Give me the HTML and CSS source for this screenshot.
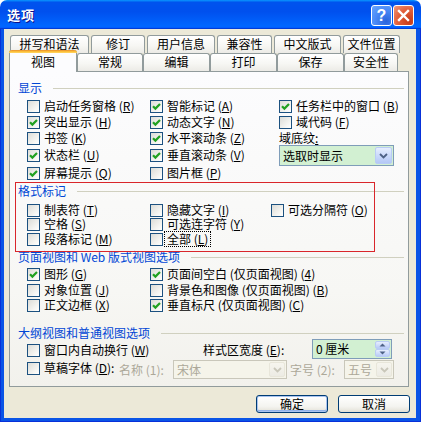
FILE: index.html
```html
<!DOCTYPE html>
<html lang="zh-CN">
<head>
<meta charset="utf-8">
<title>选项</title>
<link rel="stylesheet" href="styles.css">
</head>
<body>
<div class="window">
  <div class="titlebar">
    <span class="title">选项</span>
    <div class="tb-buttons">
      <span class="tb-btn help">?</span>
      <span class="tb-btn close"><svg width="19" height="19" viewBox="0 0 19 19"><path d="M5 5 L14 14 M14 5 L5 14" stroke="#fff" stroke-width="2.4" stroke-linecap="square"/></svg></span>
    </div>
  </div>
  <div class="frame">
    <div class="client">
      <div class="tabrow row1">
        <span class="tab">拼写和语法</span>
        <span class="tab">修订</span>
        <span class="tab">用户信息</span>
        <span class="tab">兼容性</span>
        <span class="tab">中文版式</span>
        <span class="tab">文件位置</span>
      </div>
      <div class="tabrow row2">
        <span class="tab sel">视图</span>
        <span class="tab">常规</span>
        <span class="tab">编辑</span>
        <span class="tab">打印</span>
        <span class="tab">保存</span>
        <span class="tab">安全性</span>
      </div>
      <div class="panel">
        <section class="group g1">
          <div class="ghead"><span class="gtitle">显示</span><span class="gline"></span></div>
          <div class="grid grid1">
            <label class="cb"><span class="box"></span><span class="lbl">启动任务窗格 (<u>R</u>)</span></label>
            <label class="cb"><span class="box on"><svg viewBox="0 0 11 11"><path d="M2 5.2 L4.4 7.6 L9 3" /></svg></span><span class="lbl">智能标记 (<u>A</u>)</span></label>
            <label class="cb"><span class="box on"><svg viewBox="0 0 11 11"><path d="M2 5.2 L4.4 7.6 L9 3" /></svg></span><span class="lbl">任务栏中的窗口 (<u>B</u>)</span></label>

            <label class="cb"><span class="box on"><svg viewBox="0 0 11 11"><path d="M2 5.2 L4.4 7.6 L9 3" /></svg></span><span class="lbl">突出显示 (<u>H</u>)</span></label>
            <label class="cb"><span class="box on"><svg viewBox="0 0 11 11"><path d="M2 5.2 L4.4 7.6 L9 3" /></svg></span><span class="lbl">动态文字 (<u>N</u>)</span></label>
            <label class="cb"><span class="box"></span><span class="lbl">域代码 (<u>F</u>)</span></label>

            <label class="cb"><span class="box"></span><span class="lbl">书签 (<u>K</u>)</span></label>
            <label class="cb"><span class="box on"><svg viewBox="0 0 11 11"><path d="M2 5.2 L4.4 7.6 L9 3" /></svg></span><span class="lbl">水平滚动条 (<u>Z</u>)</span></label>
            <span class="plain">域底纹<u>:</u></span>

            <label class="cb"><span class="box on"><svg viewBox="0 0 11 11"><path d="M2 5.2 L4.4 7.6 L9 3" /></svg></span><span class="lbl">状态栏 (<u>U</u>)</span></label>
            <label class="cb"><span class="box on"><svg viewBox="0 0 11 11"><path d="M2 5.2 L4.4 7.6 L9 3" /></svg></span><span class="lbl">垂直滚动条 (<u>V</u>)</span></label>
            <div class="combo shade">
              <span class="ctext">选取时显示</span>
              <span class="arrow"><svg width="9" height="6" viewBox="0 0 9 6"><path d="M1 1 L4.5 4.5 L8 1" /></svg></span>
            </div>

            <label class="cb"><span class="box on"><svg viewBox="0 0 11 11"><path d="M2 5.2 L4.4 7.6 L9 3" /></svg></span><span class="lbl">屏幕提示 (<u>Q</u>)</span></label>
            <label class="cb"><span class="box"></span><span class="lbl">图片框 (<u>P</u>)</span></label>
          </div>
        </section>

        <section class="group g2">
          <div class="ghead"><span class="gtitle">格式标记</span><span class="gline"></span></div>
          <div class="grid grid2">
            <label class="cb"><span class="box"></span><span class="lbl">制表符 (<u>T</u>)</span></label>
            <label class="cb"><span class="box"></span><span class="lbl">隐藏文字 (<u>I</u>)</span></label>
            <label class="cb"><span class="box"></span><span class="lbl">可选分隔符 (<u>O</u>)</span></label>

            <label class="cb"><span class="box"></span><span class="lbl">空格 (<u>S</u>)</span></label>
            <label class="cb"><span class="box"></span><span class="lbl">可选连字符 (<u>Y</u>)</span></label>
            <span></span>

            <label class="cb"><span class="box"></span><span class="lbl">段落标记 (<u>M</u>)</span></label>
            <label class="cb"><span class="box"></span><span class="lbl focus">全部 (<u>L</u>)</span></label>
          </div>
        </section>

        <section class="group g3">
          <div class="ghead"><span class="gtitle">页面视图和 Web 版式视图选项</span><span class="gline"></span></div>
          <div class="grid grid3">
            <label class="cb"><span class="box on"><svg viewBox="0 0 11 11"><path d="M2 5.2 L4.4 7.6 L9 3" /></svg></span><span class="lbl">图形 (<u>G</u>)</span></label>
            <label class="cb"><span class="box on"><svg viewBox="0 0 11 11"><path d="M2 5.2 L4.4 7.6 L9 3" /></svg></span><span class="lbl">页面间空白 (仅页面视图) (<u>4</u>)</span></label>

            <label class="cb"><span class="box"></span><span class="lbl">对象位置 (<u>J</u>)</span></label>
            <label class="cb"><span class="box"></span><span class="lbl">背景色和图像 (仅页面视图) (<u>B</u>)</span></label>

            <label class="cb"><span class="box"></span><span class="lbl">正文边框 (<u>X</u>)</span></label>
            <label class="cb"><span class="box on"><svg viewBox="0 0 11 11"><path d="M2 5.2 L4.4 7.6 L9 3" /></svg></span><span class="lbl">垂直标尺 (仅页面视图) (<u>C</u>)</span></label>
          </div>
        </section>

        <section class="group g4">
          <div class="ghead"><span class="gtitle">大纲视图和普通视图选项</span><span class="gline"></span></div>
          <div class="row row-a">
            <label class="cb w176"><span class="box"></span><span class="lbl">窗口内自动换行 (<u>W</u>)</span></label>
            <span class="plain">样式区宽度 (<u>E</u>):</span>
            <div class="spin shade">
              <span class="ctext">0 厘米</span>
              <span class="spinbtns">
                <span class="sbtn"><svg width="7" height="4" viewBox="0 0 7 4"><path d="M0.5 3.5 L3.5 0.5 L6.5 3.5Z"/></svg></span>
                <span class="sbtn"><svg width="7" height="4" viewBox="0 0 7 4"><path d="M0.5 0.5 L3.5 3.5 L6.5 0.5Z"/></svg></span>
              </span>
            </div>
          </div>
          <div class="row row-b">
            <label class="cb w92"><span class="box"></span><span class="lbl">草稿字体 (<u>D</u>):</span></label>
            <span class="dlabel">名称 (1):</span>
            <div class="combo dis w114">
              <span class="ctext">宋体</span>
              <span class="arrow"><svg width="9" height="6" viewBox="0 0 9 6"><path d="M1 1 L4.5 4.5 L8 1" /></svg></span>
            </div>
            <span class="dlabel ml3">字号 (2):</span>
            <div class="combo dis w50">
              <span class="ctext">五号</span>
              <span class="arrow"><svg width="9" height="6" viewBox="0 0 9 6"><path d="M1 1 L4.5 4.5 L8 1" /></svg></span>
            </div>
          </div>
        </section>
      </div>
      <div class="actions">
        <button class="btn default">确定</button>
        <button class="btn">取消</button>
      </div>
    </div>
  </div>
</div>
</body>
</html>
```

FILE: styles.css
```css
* { box-sizing: border-box; margin: 0; padding: 0; }
html, body { width: 421px; height: 422px; overflow: hidden; }
body {
  background: #ffffff;
  font-family: "Noto Sans CJK SC", "Noto Sans", sans-serif;
  font-size: 12px;
  color: #000;
}
u { text-decoration: underline; text-underline-offset: 1px; }

.window { width: 421px; height: 422px; display: flex; flex-direction: column; }

/* title bar */
.titlebar {
  height: 29px;
  flex: none;
  display: flex;
  align-items: center;
  padding: 0 7px 0 7px;
  border-radius: 7px 7px 0 0;
  background: linear-gradient(180deg, #0997ff, #0053ee 8%, #0050ee 40%, #0066ff 88%, #0066ff 93%, #005bff 95%, #003dd7 96%, #003dd7);
}
.title {
  color: #fff;
  font-weight: bold;
  font-size: 13px;
  line-height: 16px;
  letter-spacing: 1px;
  text-shadow: 1px 1px 0 #0f1089;
  margin-top: 1px;
}
.tb-buttons { margin-left: auto; display: flex; gap: 1px; margin-top: 2px; }
.tb-btn {
  width: 21px; height: 21px;
  border: 1px solid #fff;
  border-radius: 3px;
  display: flex; align-items: center; justify-content: center;
}
.help {
  background: radial-gradient(circle at 75% 80%, #2a63dc 0%, #4b8bf7 55%, #6aa6ff 100%);
  color: #fff;
  font-family: "Liberation Sans", sans-serif;
  font-weight: bold;
  font-size: 16px;
  line-height: 19px;
}
.close {
  background: radial-gradient(circle at 80% 80%, #c73a17 0%, #e2603c 55%, #f09a7e 100%);
}

/* frame + client */
.frame {
  flex: 1;
  display: flex;
  background: #0a54e6;
  border: 1px solid #0831d9;
  border-top: none;
  padding: 0 4px 3px 3px;
}
.client {
  flex: 1;
  background: #ece9d8;
  display: flex;
  flex-direction: column;
  padding: 6px 0 0 5px;
}

/* tabs */
.tabrow { display: flex; }
.row1 { margin-left: 1px; gap: 2px; }
.tab {
  height: 18px;
  border: 1px solid #919b9c;
  border-bottom: none;
  border-radius: 3px 3px 0 0;
  background: linear-gradient(#ffffff, #f7f7f4 55%, #ecebe6);
  text-align: center;
  line-height: 16px;
  white-space: nowrap;
}
.row1 .tab:nth-child(1) { width: 79px; }
.row1 .tab:nth-child(2) { width: 54px; }
.row1 .tab:nth-child(3) { width: 68px; }
.row1 .tab:nth-child(4) { width: 55px; }
.row1 .tab:nth-child(5) { width: 67px; }
.row1 .tab:nth-child(6) { width: 57px; }
.row2 .tab:nth-child(1) { width: 68px; }
.row2 .tab:nth-child(2) { width: 66px; }
.row2 .tab:nth-child(3) { width: 67px; }
.row2 .tab:nth-child(4) { width: 67px; }
.row2 .tab:nth-child(5) { width: 67px; }
.row2 .tab:nth-child(6) { width: 54px; }
.tab.sel {
  position: relative;
  z-index: 2;
  height: 22px;
  margin-top: -3px;
  margin-bottom: -1px;
  border-top: none;
  background: #fcfcfe;
  padding-top: 5px;
  line-height: 14px;
}
.tab.sel::before {
  content: "";
  position: absolute;
  left: -1px; right: -1px; top: 0;
  height: 3px;
  border-radius: 3px 3px 0 0;
  background: linear-gradient(#e68b2c, #ffc73c 60%, #ffd56b);
}

/* panel */
.panel {
  width: 400px;
  height: 316px;
  border: 1px solid #919b9c;
  background: linear-gradient(#fcfcfe, #f7f7f4 70%, #f2f1ec);
  padding: 9px 0 0 8px;
}
.ghead { display: flex; align-items: center; height: 14px; gap: 11px; }
.gtitle { color: #0046d5; line-height: 14px; white-space: nowrap; }
.gline { flex: 1; height: 1px; background: #d0d0bf; margin-right: 4px; }

.grid { display: grid; padding-left: 9px; }
.grid1 {
  grid-template-columns: 123px 129px 1fr;
  grid-template-rows: 16px 16px 17px 18px 17px;
  margin-top: 3px;
}
.grid2 {
  grid-template-columns: 123px 121px 1fr;
  grid-template-rows: 14px 15px 16px;
  margin-top: 4px;
}
.grid3 {
  grid-template-columns: 123px 1fr;
  grid-template-rows: 16px 15px 16px;
  margin-top: 2px;
}

.g2 { position: relative; padding-top: 2px; }
.g2::after {
  content: "";
  position: absolute;
  left: -3px; top: 0;
  width: 358px; height: 68px;
  border: 1px solid #d9262b;
  pointer-events: none;
}
.g3 { margin-top: 3px; }
.g4 { margin-top: 13px; }

/* checkbox */
.cb { display: flex; align-items: flex-start; white-space: nowrap; }
.box {
  flex: none;
  width: 13px; height: 13px;
  margin-top: 2px;
  border: 1px solid #1c5180;
  background: linear-gradient(135deg, #dcdcd7, #f6f6f3 70%, #ffffff);
  display: flex; align-items: center; justify-content: center;
}
.box svg { width: 11px; height: 11px; }
.box svg path { fill: none; stroke: #21a121; stroke-width: 2.2; }
.lbl { margin-left: 4px; margin-top: 1px; line-height: 14px; }
.lbl.focus { outline: 1px dotted #000; margin-left: 2px; padding: 0 2px 0 2px; }
.plain { line-height: 14px; margin-top: 1px; white-space: nowrap; }

/* combos */
.combo {
  display: flex; align-items: center; justify-content: space-between;
  border: 1px solid #7f9db9;
  padding-left: 3px;
}
.shade { background: #d2f0d2; }
.grid1 .combo {
  grid-column: 3;
  grid-row: 4 / span 2;
  align-self: start;
  margin-top: -2px;
  width: 115px; height: 21px;
}
.ctext { line-height: 14px; white-space: nowrap; }
.arrow {
  width: 17px; height: 17px;
  margin-right: 1px;
  border: 1px solid #b9ccf5;
  border-radius: 2px;
  background: linear-gradient(#e6eefe, #c6d6fa 60%, #b4c8f6);
  display: flex; align-items: center; justify-content: center;
}
.arrow svg path { fill: none; stroke: #4d6185; stroke-width: 1.8; }
.combo.dis {
  height: 19px;
  border-color: #c9c7ba;
  background: #f5f4ea;
  color: #aca899;
}
.combo.dis .arrow {
  width: 16px; height: 15px;
  border-color: #e8e6da;
  background: linear-gradient(#f6f5ee, #ecebe4);
}
.combo.dis .arrow svg path { stroke: #c9c7ba; }
.w114 { width: 114px; }
.w50 { width: 50px; }

/* outline rows */
.row { display: flex; align-items: flex-start; padding-left: 9px; }
.row-a { height: 18px; margin-top: 2px; }
.row-b { height: 19px; }
.w176 { width: 176px; }
.w92 { width: 92px; }
.spin {
  margin-left: auto;
  margin-right: 16px;
  margin-top: -3px;
  width: 80px; height: 20px;
  border: 1px solid #7f9db9;
  display: flex; align-items: center; justify-content: space-between;
  padding-left: 3px;
}
.spinbtns { display: flex; flex-direction: column; margin-right: 1px; }
.sbtn {
  width: 15px; height: 8px;
  border: 1px solid #b9ccf5;
  border-radius: 2px;
  background: linear-gradient(#e6eefe, #b9cbf7);
  display: flex; align-items: center; justify-content: center;
}
.sbtn svg path { fill: #4d6185; }
.dlabel {
  color: #aca899;
  width: 54px;
  line-height: 14px;
  margin-top: 3px;
  white-space: nowrap;
}
.ml3 { margin-left: 3px; }

/* buttons */
.actions {
  display: flex;
  justify-content: flex-end;
  gap: 10px;
  margin-top: 8px;
  padding-right: 6px;
}
.btn {
  width: 72px; height: 18px;
  border: 1px solid #003c74;
  border-radius: 3px;
  background: linear-gradient(#ffffff, #f4f4f0 65%, #e3e1d6);
  font-family: "Noto Sans CJK SC", sans-serif;
  font-size: 12px;
  line-height: 14px;
  color: #000;
}
.btn.default { box-shadow: inset 0 0 0 1px #a9c4f0, inset 0 -1px 0 1px #8fb1ea; }
```
